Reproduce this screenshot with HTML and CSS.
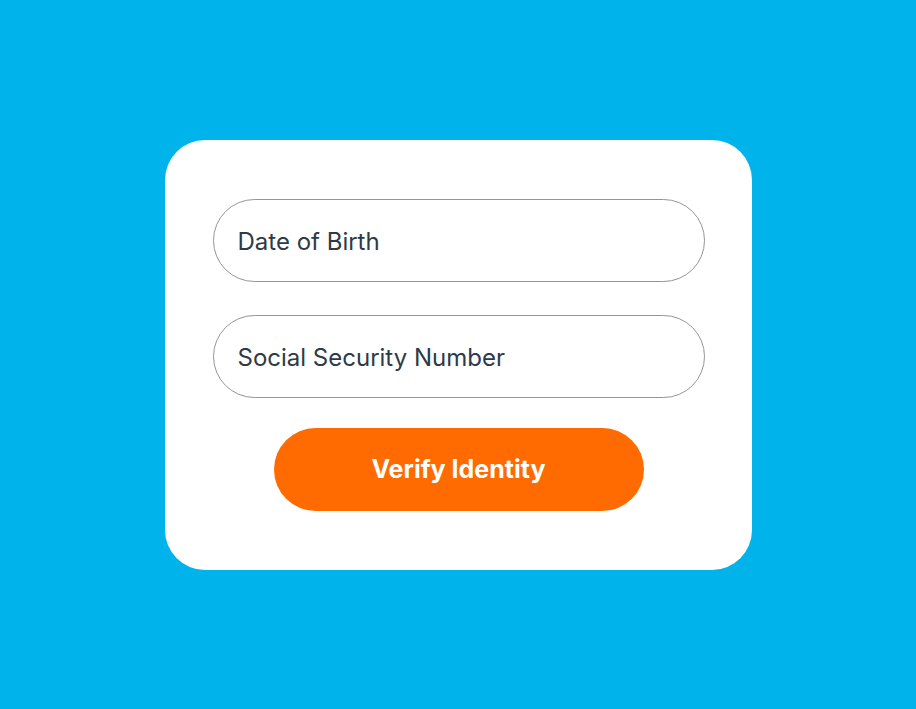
FILE: index.html
```html
<!DOCTYPE html>
<html lang="en">
<head>
  <meta charset="UTF-8">
  <title>Verify Identity</title>
  <meta name="viewport" content="width=device-width, initial-scale=1.0">
  <link rel="stylesheet" href="styles.css">
</head>
<body>
  <form class="card" onsubmit="return false">
    <input class="field" type="text" placeholder="Date of Birth">
    <input class="field field-ssn" type="text" placeholder="Social Security Number">
    <button class="verify" type="submit">Verify Identity</button>
  </form>
</body>
</html>
```

FILE: styles.css
```css
:root {
  --sky: #00b4eb;
  --ink: #2e3a46;
  --line: #959595;
  --orange: #ff6b00;
}

* {
  box-sizing: border-box;
}

body {
  margin: 0;
  min-height: 100vh;
  background: var(--sky);
  font-family: Inter, 'Noto Sans', sans-serif;
  display: flex;
  justify-content: center;
  align-items: center;
}

.card {
  width: 587px;
  background: #fff;
  border-radius: 40px;
  padding: 59px 47px 59px 48px;
  display: flex;
  flex-direction: column;
  align-items: center;
}

.field {
  width: 100%;
  height: 83px;
  border: 1.5px solid var(--line);
  border-radius: 42px;
  padding: 3px 24px 0;
  font-family: inherit;
  font-size: 24px;
  color: var(--ink);
  background: #fff;
  outline: none;
}

.field::placeholder {
  color: var(--ink);
  opacity: 1;
}

.field-ssn {
  margin-top: 33px;
}

.verify {
  margin-top: 30px;
  width: 370px;
  height: 83px;
  border: none;
  border-radius: 42px;
  background: var(--orange);
  color: #fff;
  font-family: inherit;
  font-size: 25px;
  font-weight: 700;
  cursor: pointer;
}
```
